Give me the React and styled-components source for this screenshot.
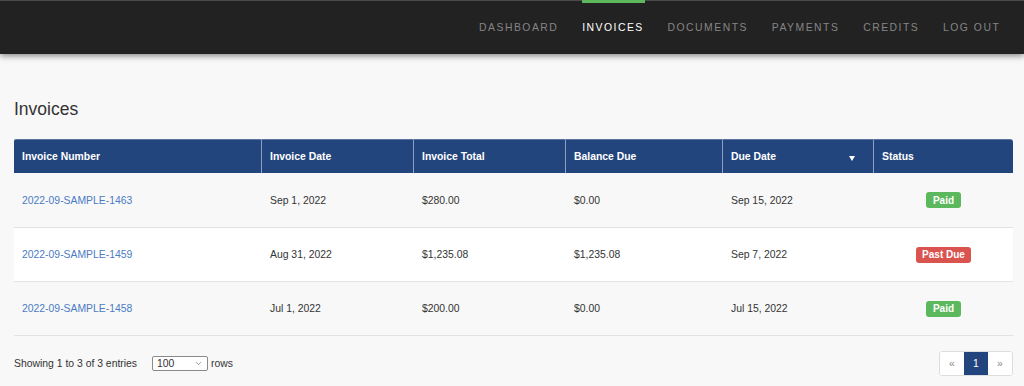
import styled, { createGlobalStyle } from "styled-components";
import { ChevronDown } from "lucide-react";

const invoices = [
  { number: "2022-09-SAMPLE-1463", date: "Sep 1, 2022", total: "$280.00", balance: "$0.00", due: "Sep 15, 2022", status: "Paid" },
  { number: "2022-09-SAMPLE-1459", date: "Aug 31, 2022", total: "$1,235.08", balance: "$1,235.08", due: "Sep 7, 2022", status: "Past Due" },
  { number: "2022-09-SAMPLE-1458", date: "Jul 1, 2022", total: "$200.00", balance: "$0.00", due: "Jul 15, 2022", status: "Paid" },
];

const navItems = ["Dashboard", "Invoices", "Documents", "Payments", "Credits", "Log Out"];

export default function App() {
  return (
    <>
      <GlobalStyle />
      <NavBar>
        {navItems.map((item) => (
          <NavItem key={item} $active={item === "Invoices"}>
            {item}
          </NavItem>
        ))}
      </NavBar>
      <Main>
        <Title>Invoices</Title>
        <Table>
          <HeadRow>
            <HeadCell>Invoice Number</HeadCell>
            <HeadCell>Invoice Date</HeadCell>
            <HeadCell>Invoice Total</HeadCell>
            <HeadCell>Balance Due</HeadCell>
            <HeadCell>
              Due Date
              <SortArrow />
            </HeadCell>
            <HeadCell $last>Status</HeadCell>
          </HeadRow>
          {invoices.map((inv, i) => (
            <Row key={inv.number} $even={i % 2 === 1} $first={i === 0}>
              <Cell>
                <InvoiceLink href="#">{inv.number}</InvoiceLink>
              </Cell>
              <Cell>{inv.date}</Cell>
              <Cell>{inv.total}</Cell>
              <Cell>{inv.balance}</Cell>
              <Cell>{inv.due}</Cell>
              <StatusCell>
                <Badge $paid={inv.status === "Paid"}>{inv.status}</Badge>
              </StatusCell>
            </Row>
          ))}
        </Table>
        <Footer>
          <Info>
            Showing 1 to 3 of 3 entries
            <SelectWrap>
              <RowsSelect defaultValue="100">
                <option>10</option>
                <option>25</option>
                <option>50</option>
                <option>100</option>
              </RowsSelect>
              <SelectChevron size={9} strokeWidth={1.6} />
            </SelectWrap>
            rows
          </Info>
          <Pager>
            <PageButton>«</PageButton>
            <PageButton $active>1</PageButton>
            <PageButton>»</PageButton>
          </Pager>
        </Footer>
      </Main>
    </>
  );
}

const GlobalStyle = createGlobalStyle`
  body {
    margin: 0;
    background: #f8f8f8;
    font-family: "Liberation Sans", Arial, sans-serif;
    color: #333333;
  }
`;

const NavBar = styled.nav`
  height: 54px;
  background: #222222;
  border-top: 1px solid #4a4a4a;
  box-sizing: border-box;
  display: flex;
  justify-content: flex-end;
  align-items: center;
  padding-right: 12px;
  box-shadow: 0 2px 6px rgba(0, 0, 0, 0.45);
  position: relative;
  z-index: 1;
`;

const NavItem = styled.a`
  position: relative;
  height: 100%;
  display: flex;
  align-items: center;
  padding: 0 11.75px 0 12px;
  font-size: 10.4px;
  letter-spacing: 1.5px;
  text-transform: uppercase;
  color: ${(p) => (p.$active ? "#ffffff" : "#858585")};
  cursor: pointer;
  &::before {
    content: "";
    display: ${(p) => (p.$active ? "block" : "none")};
    position: absolute;
    top: -1px;
    left: 12px;
    right: 10.5px;
    height: 3px;
    background: #5cb85c;
  }
`;

const Main = styled.main`
  padding: 0 11px 0 14px;
`;

const Title = styled.h1`
  margin: 0;
  padding: 43px 0 18px;
  font-size: 17.5px;
  font-weight: 400;
  line-height: 24px;
  color: #333333;
`;

const Table = styled.div`
  display: grid;
  grid-template-columns: 248px 152px 152px 157px 151px 1fr;
  border-bottom: 1px solid #e3e3e3;
`;

const HeadRow = styled.div`
  display: contents;
`;

const HeadCell = styled.div`
  height: 34px;
  display: flex;
  align-items: center;
  justify-content: space-between;
  padding: 0 18px 0 8px;
  background: #23457e;
  color: #ffffff;
  font-size: 10.4px;
  font-weight: 700;
  border-right: ${(p) => (p.$last ? "none" : "1px solid #8e9fbf")};
  border-top: 1px solid #5b74a0;
  box-sizing: border-box;
  &:first-child {
    border-top-left-radius: 2px;
  }
  ${(p) => p.$last && "border-top-right-radius: 3px;"}
`;

const SortArrow = styled.span`
  width: 0;
  height: 0;
  margin-top: 3px;
  border-left: 3.5px solid transparent;
  border-right: 3.5px solid transparent;
  border-top: 5px solid #ffffff;
`;

const Row = styled.div`
  display: contents;
  & > div {
    background: ${(p) => (p.$even ? "#ffffff" : "#f8f8f8")};
    border-top: ${(p) => (p.$first ? "none" : "1px solid #e3e3e3")};
  }
`;

const Cell = styled.div`
  height: 54px;
  display: flex;
  align-items: center;
  padding: 0 8px;
  font-size: 10.4px;
  color: #333333;
  box-sizing: border-box;
`;

const StatusCell = styled(Cell)`
  justify-content: center;
`;

const InvoiceLink = styled.a`
  color: #4b7bc4;
  text-decoration: none;
`;

const Badge = styled.span`
  display: inline-flex;
  align-items: center;
  height: 16px;
  padding: 0 6.5px;
  border-radius: 3px;
  font-size: 10px;
  font-weight: 700;
  color: #ffffff;
  background: ${(p) => (p.$paid ? "#5cb85c" : "#d9534f")};
`;

const Footer = styled.div`
  display: flex;
  justify-content: space-between;
  align-items: center;
  padding-top: 15px;
`;

const Info = styled.div`
  display: flex;
  align-items: center;
  gap: 3px;
  font-size: 10.4px;
  color: #333333;
`;

const SelectWrap = styled.span`
  position: relative;
  display: inline-flex;
  margin-left: 12px;
`;

const RowsSelect = styled.select`
  appearance: none;
  width: 56px;
  height: 15px;
  padding: 0 0 0 4px;
  font-family: "Liberation Sans", Arial, sans-serif;
  font-size: 10.4px;
  color: #333333;
  background: #ffffff;
  border: 1px solid #8a8a8a;
  border-radius: 2px;
  outline: none;
`;

const SelectChevron = styled(ChevronDown)`
  position: absolute;
  right: 5px;
  top: 3px;
  color: #555555;
  pointer-events: none;
`;

const Pager = styled.div`
  display: flex;
  border: 1px solid #dddddd;
  border-radius: 3px;
  overflow: hidden;
  background: #ffffff;
`;

const PageButton = styled.span`
  width: 24px;
  height: 23px;
  display: flex;
  align-items: center;
  justify-content: center;
  font-size: 10.4px;
  color: ${(p) => (p.$active ? "#ffffff" : "#888888")};
  background: ${(p) => (p.$active ? "#23457e" : "#ffffff")};
`;
